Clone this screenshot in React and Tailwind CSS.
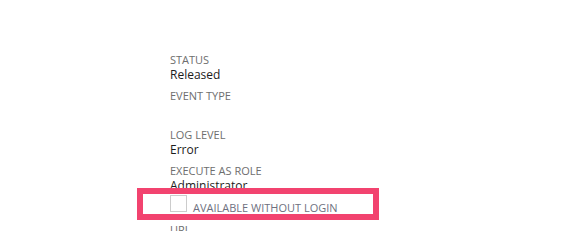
import React from 'react';

// Read-only detail list with one highlighted row
const fields = [
  { label: 'STATUS', value: 'Released' },
  { label: 'EVENT TYPE', value: '' },
  { label: 'LOG LEVEL', value: 'Error' },
  { label: 'EXECUTE AS ROLE', value: 'Administrator' },
];

function Field({ label, value, last }) {
  return (
    <div className={last ? '' : 'mb-[6px]'}>
      <div className="text-[11px] leading-[15px] text-[#6e6e6e] uppercase">{label}</div>
      <div className={`text-[12px] leading-[15px] text-[#1c1c1c] ${value ? '' : 'h-[18px]'}`}>{value}</div>
    </div>
  );
}

export default function App() {
  return (
    <div
      className="relative w-[576px] h-[231px] overflow-hidden bg-white"
      style={{ fontFamily: '"Open Sans", "Noto Sans", sans-serif' }}
    >
      <div className="pl-[170px] pt-[52px]">
        {fields.map((f, i) => (
          <Field key={f.label} label={f.label} value={f.value} last={i === fields.length - 1} />
        ))}
        <div className="flex items-start gap-[6px] h-[17px] mt-[2px]">
          <span className="w-[17px] h-[17px] border border-[#cccccc] bg-white shrink-0" />
          <span className="text-[11px] leading-[15px] text-[#6e7080] mt-[5px]">AVAILABLE WITHOUT LOGIN</span>
        </div>
        <div className="mt-[10px] text-[11px] leading-[15px] text-[#6e6e6e]">URL</div>
      </div>
      {/* annotation highlight */}
      <div className="absolute left-[137px] top-[188px] w-[242px] h-[32px] border-[6px] border-[#f2436f]" />
    </div>
  );
}
